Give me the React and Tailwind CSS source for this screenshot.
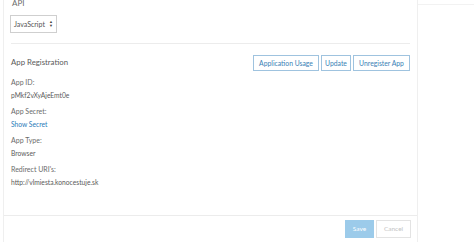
import React from 'react';

const Field = ({ label, value, link }) => (
    <div className="mb-[7px]">
        <div className="text-[7px] leading-[9px] text-[#6b6b6b]">{label}</div>
        <div className={`mt-[4px] text-[6.7px] leading-[9px] ${link ? 'text-[#2a7ab8]' : 'text-[#5a5a5a]'}`}>{value}</div>
    </div>
);

const buttons = [
    { label: 'Application Usage', w: 'w-[66px]' },
    { label: 'Update', w: 'w-[30px]' },
    { label: 'Unregister App', w: 'w-[57px]' },
];

const App = () => {
    return (
        <div className="w-[474px] h-[242px] bg-white overflow-hidden flex" style={{ fontFamily: 'Lato, "Open Sans", sans-serif' }}>
            <div className="ml-[3px] w-[415px] h-full border-l border-r border-[#efefef] flex flex-col">
                <div className="px-[7px] -mt-[2px]">
                    <div className="text-[8px] leading-[10px] text-[#6b6b6b] pl-[1px]">API</div>
                    <div className="mt-[7px] -ml-[1px] w-[47px] h-[18px] border border-[#cfcfcf] flex items-center justify-between px-[3px] text-[7px] text-[#555]">
                        <span>JavaScript</span>
                        <span className="flex flex-col text-[4px] leading-[4px] text-[#444]">
                            <span>▲</span>
                            <span>▼</span>
                        </span>
                    </div>
                    <div className="mt-[10px] border-t border-[#ececec]" />
                </div>
                <div className="px-[7px] flex-1">
                    <div className="flex items-center justify-between mt-[11px]">
                        <div className="text-[7.8px] text-[#5a5a5a]">App Registration</div>
                        <div className="flex gap-[2px]">
                            {buttons.map((b) => (
                                <button key={b.label} type="button" className={`${b.w} h-[16px] border border-[#9fc3df] text-[6.8px] text-[#3a7fb5] bg-white`}>
                                    {b.label}
                                </button>
                            ))}
                        </div>
                    </div>
                    <div className="mt-[7px]">
                        <Field label="App ID:" value="pMkf2vXyAjeEmt0e" />
                        <Field label="App Secret:" value="Show Secret" link />
                        <Field label="App Type:" value="Browser" />
                        <Field label="Redirect URI's:" value="http://vlmiesta.konocestuje.sk" />
                    </div>
                </div>
                <div className="border-t border-[#ececec] h-[27px] flex justify-end items-center gap-[2px] pr-[6px]">
                    <button type="button" className="h-[18px] w-[29px] bg-[#9ccbea] text-white text-[6.5px]">Save</button>
                    <button type="button" className="h-[18px] w-[35px] border border-[#e3e3e3] text-[#c4c4c4] text-[6.5px] bg-white">Cancel</button>
                </div>
            </div>
            <div className="flex-1 mt-[4px] border-t border-[#f2f2f2]" />
        </div>
    );
};

export default App;
